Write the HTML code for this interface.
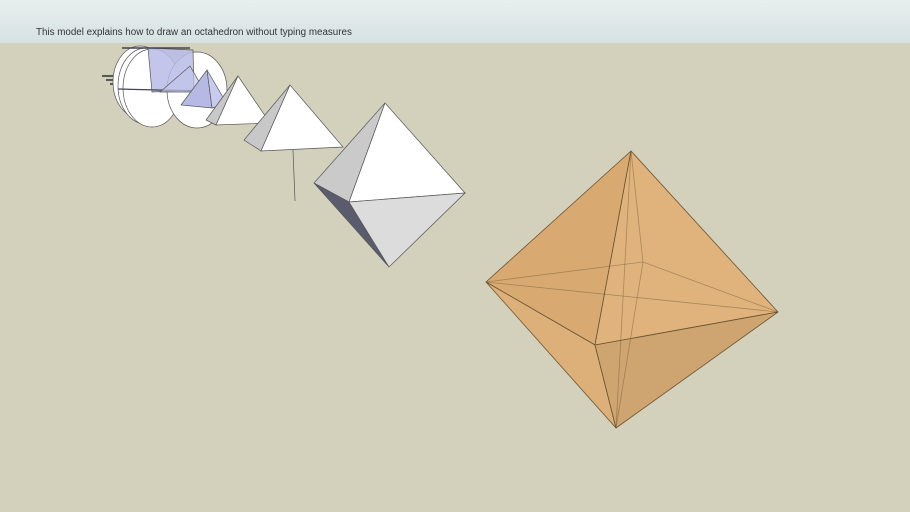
<!DOCTYPE html>
<html><head><meta charset="utf-8"><style>
html,body{margin:0;padding:0}
body{width:910px;height:512px;overflow:hidden;position:relative;background:#d3d1bb;font-family:"Liberation Sans",sans-serif}
#sky{position:absolute;left:0;top:0;width:910px;height:43px;background:linear-gradient(#e8eeee,#d6e2e2)}
#t{position:absolute;left:36px;top:27px;font-size:9.8px;color:#333}
svg{position:absolute;left:0;top:0}
</style></head><body>
<div id="sky"></div>
<div id="t">This model explains how to draw an octahedron without typing measures</div>
<svg width="910" height="512" viewBox="0 0 910 512">
<g stroke="#555" stroke-width="0.7" fill="#fff">
<line x1="102" y1="76" x2="125" y2="76" stroke="#333" stroke-width="1.5"/>
<line x1="106" y1="80" x2="130" y2="80" stroke="#333" stroke-width="1.5"/>
<line x1="110" y1="84" x2="140" y2="84" stroke="#333" stroke-width="1.5"/>
<ellipse cx="140" cy="82" rx="27" ry="36"/>
<ellipse cx="146" cy="86" rx="28" ry="38"/>
<ellipse cx="152" cy="88" rx="29" ry="39"/>
<ellipse cx="197" cy="90" rx="30" ry="38"/>
<polygon points="148,48 193,50 194,90 152,92" fill="#b8bce6" fill-opacity="0.85"/>
<line x1="122" y1="48" x2="190" y2="48" stroke="#445" stroke-width="1.5"/>
<line x1="118" y1="89" x2="200" y2="91" stroke="#445" stroke-width="1.2"/>
<polygon points="160,92 190,66 205,92" fill="#c2c5ea" fill-opacity="0.7"/>
<polygon points="207,70 181,105 212,108" fill="#b5b9e4"/>
<polygon points="207,70 212,108 227,104" fill="#c8cbee"/>
<polygon points="238,76 206,120 216,125" fill="#c8c8c8"/>
<polygon points="238,76 216,125 270,123" fill="#fff"/>
<line x1="293" y1="150" x2="295" y2="201" stroke="#555"/>
<polygon points="290,85 244,140 261,151" fill="#c8c8c8"/>
<polygon points="290,85 261,151 343,147" fill="#fff"/>
<polygon points="385,103 314,183 349,202" fill="#cacaca"/>
<polygon points="385,103 349,202 465,193" fill="#fff"/>
<polygon points="314,183 349,202 389,267" fill="#5b5b6e"/>
<polygon points="349,202 465,193 389,267" fill="#dcdcdc"/>
</g>
<g stroke="#6b5230" stroke-width="0.8" stroke-linejoin="round">
<polygon points="631,151 486,282 595,345" fill="#d8aa72"/>
<polygon points="631,151 595,345 778,312" fill="#e0b37c"/>
<polygon points="486,282 595,345 616,428" fill="#ddb07a"/>
<polygon points="595,345 778,312 616,428" fill="#cea471"/>
<g stroke-opacity="0.45" fill="none">
<line x1="631" y1="151" x2="643" y2="262"/>
<line x1="486" y1="282" x2="643" y2="262"/>
<line x1="778" y1="312" x2="643" y2="262"/>
<line x1="616" y1="428" x2="643" y2="262"/>
<line x1="486" y1="282" x2="778" y2="312"/>
<line x1="631" y1="151" x2="616" y2="428"/>
</g>
</g>
</svg>
</body></html>
